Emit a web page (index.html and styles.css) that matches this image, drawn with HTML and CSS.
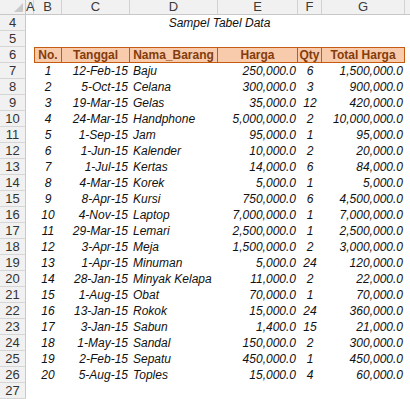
FILE: index.html
```html
<!DOCTYPE html>
<html>
<head>
<meta charset="utf-8">
<link rel="stylesheet" href="styles.css">
</head>
<body>
<div class="sheet">
  <div class="row colhead">
    <div class="corner"><span class="tri"></span></div>
    <div class="ch">A</div><div class="ch">B</div><div class="ch">C</div><div class="ch">D</div><div class="ch">E</div><div class="ch">F</div><div class="ch">G</div><div class="ch last"></div>
  </div>
  <div class="row"><div class="rh">4</div><div class="c"></div><div class="c title">Sampel Tabel Data</div></div>
  <div class="row"><div class="rh">5</div></div>
  <div class="row"><div class="rh">6</div><div class="c"></div>
    <div class="th first">No.</div><div class="th">Tanggal</div><div class="th">Nama_Barang</div><div class="th">Harga</div><div class="th">Qty</div><div class="th">Total Harga</div>
  </div>
  <div id="body"></div>
  <div class="row"><div class="rh">27</div></div>
</div>
<script>
var data = [
["1","12-Feb-15","Baju","250,000.0","6","1,500,000.0"],
["2","5-Oct-15","Celana","300,000.0","3","900,000.0"],
["3","19-Mar-15","Gelas","35,000.0","12","420,000.0"],
["4","24-Mar-15","Handphone","5,000,000.0","2","10,000,000.0"],
["5","1-Sep-15","Jam","95,000.0","1","95,000.0"],
["6","1-Jun-15","Kalender","10,000.0","2","20,000.0"],
["7","1-Jul-15","Kertas","14,000.0","6","84,000.0"],
["8","4-Mar-15","Korek","5,000.0","1","5,000.0"],
["9","8-Apr-15","Kursi","750,000.0","6","4,500,000.0"],
["10","4-Nov-15","Laptop","7,000,000.0","1","7,000,000.0"],
["11","29-Mar-15","Lemari","2,500,000.0","1","2,500,000.0"],
["12","3-Apr-15","Meja","1,500,000.0","2","3,000,000.0"],
["13","1-Apr-15","Minuman","5,000.0","24","120,000.0"],
["14","28-Jan-15","Minyak Kelapa","11,000.0","2","22,000.0"],
["15","1-Aug-15","Obat","70,000.0","1","70,000.0"],
["16","13-Jan-15","Rokok","15,000.0","24","360,000.0"],
["17","3-Jan-15","Sabun","1,400.0","15","21,000.0"],
["18","1-May-15","Sandal","150,000.0","2","300,000.0"],
["19","2-Feb-15","Sepatu","450,000.0","1","450,000.0"],
["20","5-Aug-15","Toples","15,000.0","4","60,000.0"]
];
var cls = ["ctr","rt","lt","rt","ctr","rt"];
var html = "";
data.forEach(function(r, i){
  html += '<div class="row"><div class="rh">' + (i + 7) + '</div><div class="c"></div>';
  r.forEach(function(v, j){ html += '<div class="c d ' + cls[j] + '">' + v + '</div>'; });
  html += '</div>';
});
document.getElementById("body").outerHTML = html;
</script>
</body>
</html>
```

FILE: styles.css
```css
html, body {
  margin: 0;
  padding: 0;
  background: #ffffff;
}
body {
  width: 410px;
  height: 399px;
  overflow: hidden;
  font-family: "Liberation Sans", Arial, sans-serif;
}
.sheet {
  display: flex;
  flex-direction: column;
}
.row {
  display: grid;
  grid-template-columns: 26px 8px 28px 68px 88px 80px 24px 83px 5px;
  height: 16px;
}
.colhead {
  height: 15px;
  background: #f1f1f1;
  border-bottom: 1px solid #c8c8c8;
  box-sizing: border-box;
}
.corner {
  position: relative;
  border-right: 1px solid #c8c8c8;
}
.tri {
  position: absolute;
  right: 2px;
  bottom: 2px;
  width: 0;
  height: 0;
  border-left: 9px solid transparent;
  border-bottom: 9px solid #c9c9c9;
}
.ch {
  font-size: 13px;
  line-height: 14px;
  color: #3a3a3a;
  text-align: center;
  border-right: 1px solid #d2d2d2;
}
.ch.last {
  border-right: none;
}
.rh {
  background: #f1f1f1;
  border-right: 1px solid #c8c8c8;
  border-bottom: 1px solid #d6d6d6;
  font-size: 13px;
  line-height: 15px;
  color: #333333;
  text-align: center;
}
.c {
  font-size: 12px;
  line-height: 16px;
  white-space: nowrap;
  overflow: visible;
}
.title {
  grid-column: 3 / 9;
  text-align: center;
  font-style: italic;
  color: #111;
}
.th {
  background: #f8cbad;
  color: #843c0c;
  font-weight: bold;
  font-size: 12px;
  line-height: 14px;
  text-align: center;
  white-space: nowrap;
  border-top: 1px solid #c55a11;
  border-bottom: 1px solid #c55a11;
  border-right: 1px solid #c55a11;
}
.th.first {
  border-left: 1px solid #c55a11;
}
.d {
  font-style: italic;
  color: #111;
}
.ctr { text-align: center; }
.rt { text-align: right; padding-right: 2px; }
.lt { text-align: left; padding-left: 3px; }
```
